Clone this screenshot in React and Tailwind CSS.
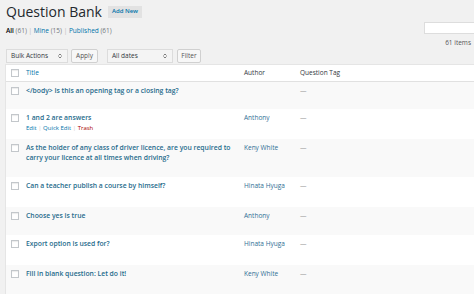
import { ChevronsUpDown } from "lucide-react";

const rows = [
  { title: "</body> Is this an opening tag or a closing tag?", author: "", h: "h-[27px]" },
  { title: "1 and 2 are answers", author: "Anthony", actions: true, h: "h-[30px]" },
  {
    title: "As the holder of any class of driver licence, are you required to carry your licence at all times when driving?",
    author: "Keny White",
    h: "h-[38px]",
  },
  { title: "Can a teacher publish a course by himself?", author: "Hinata Hyuga", h: "h-[30px]" },
  { title: "Choose yes is true", author: "Anthony", h: "h-[28px]" },
  { title: "Export option is used for?", author: "Hinata Hyuga", h: "h-[30px]" },
  { title: "Fill in blank question: Let do it!", author: "Keny White", h: "h-[29px]" },
];

const Checkbox = () => (
  <span className="block w-[8px] h-[8px] border border-[#c3c7cb] bg-white shadow-[inset_0_1px_1px_rgba(0,0,0,0.08)]" />
);

const Select = ({ label, className }) => (
  <div
    className={`flex items-center justify-between h-[14px] px-[4px] border border-[#dcdcdc] bg-[#f4f4f4] text-[6.5px] text-[#32373c] ${className}`}
  >
    <span>{label}</span>
    <ChevronsUpDown size={6} strokeWidth={3} className="text-[#555]" />
  </div>
);

const Btn = ({ label, className }) => (
  <div
    className={`flex items-center justify-center h-[14px] border border-[#d0d0d0] bg-[#f7f7f7] rounded-[2px] text-[6.5px] text-[#555] ${className}`}
  >
    {label}
  </div>
);

export default function App() {
  return (
    <div
      className="w-[474px] h-[294px] overflow-hidden bg-[#f1f1f1] text-[#32373c]"
      style={{ fontFamily: '"Open Sans", "Liberation Sans", sans-serif' }}
    >
      <div className="flex items-center pl-[6px] pt-[3px] h-[20px]">
        <h1 className="text-[14px] leading-none text-[#23282d]">Question Bank</h1>
        <span className="ml-[6px] px-[4px] h-[12px] flex items-center bg-[#e2e2e2] text-[6px] font-semibold text-[#0073aa]">
          Add New
        </span>
      </div>

      <div className="flex items-start justify-between h-[28px]">
        <div className="pl-[6px] pt-[8px] text-[6.5px] leading-none">
          <span className="font-semibold text-[#000]">All</span>
          <span className="text-[#72777c]"> (61)</span>
          <span className="text-[#bbb]"> | </span>
          <span className="text-[#0073aa]">Mine</span>
          <span className="text-[#72777c]"> (15)</span>
          <span className="text-[#bbb]"> | </span>
          <span className="text-[#0073aa]">Published</span>
          <span className="text-[#72777c]"> (61)</span>
        </div>
        <div className="flex flex-col items-end">
          <div className="mt-[2px] w-[50px] h-[12px] bg-white border border-[#ddd] border-r-0" />
          <span className="mt-[6px] mr-[3px] text-[6.5px] leading-none text-[#555]">61 items</span>
        </div>
      </div>

      <div className="flex items-center pl-[6px] h-[15px]">
        <Select label="Bulk Actions" className="w-[62px]" />
        <Btn label="Apply" className="ml-[3px] w-[27px]" />
        <Select label="All dates" className="ml-[9px] w-[66px]" />
        <Btn label="Filter" className="ml-[4px] w-[24px]" />
      </div>

      <div className="ml-[5px] mt-[1px] w-[480px] bg-white border border-[#e5e5e5]">
        <div className="flex items-center h-[17px] border-b border-[#e1e1e1] text-[6.5px]">
          <div className="w-[20px] pl-[5px] flex">
            <Checkbox />
          </div>
          <div className="w-[218px] text-[#0073aa]">Title</div>
          <div className="w-[56px]">Author</div>
          <div>Question Tag</div>
        </div>
        {rows.map((r, i) => (
          <div key={i} className={`flex ${r.h} ${i % 2 === 0 ? "bg-[#f9f9f9]" : "bg-white"}`}>
            <div className="w-[20px] pl-[5px] pt-[5px]">
              <Checkbox />
            </div>
            <div className="w-[218px] pt-[4px] pr-[2px]">
              <div className="text-[6.8px] leading-[10px] font-semibold text-[#266b8c]">{r.title}</div>
              {r.actions && (
                <div className="text-[6px] leading-[10px] text-[#ccc]">
                  <span className="text-[#0073aa]">Edit</span> | <span className="text-[#0073aa]">Quick Edit</span> |{" "}
                  <span className="text-[#a00]">Trash</span>
                </div>
              )}
            </div>
            <div className="w-[56px] pt-[4px] text-[6.5px] leading-[10px] text-[#2f6f95]">{r.author}</div>
            <div className="pt-[4px] text-[6.5px] leading-[10px] text-[#999]">—</div>
          </div>
        ))}
      </div>
    </div>
  );
}
